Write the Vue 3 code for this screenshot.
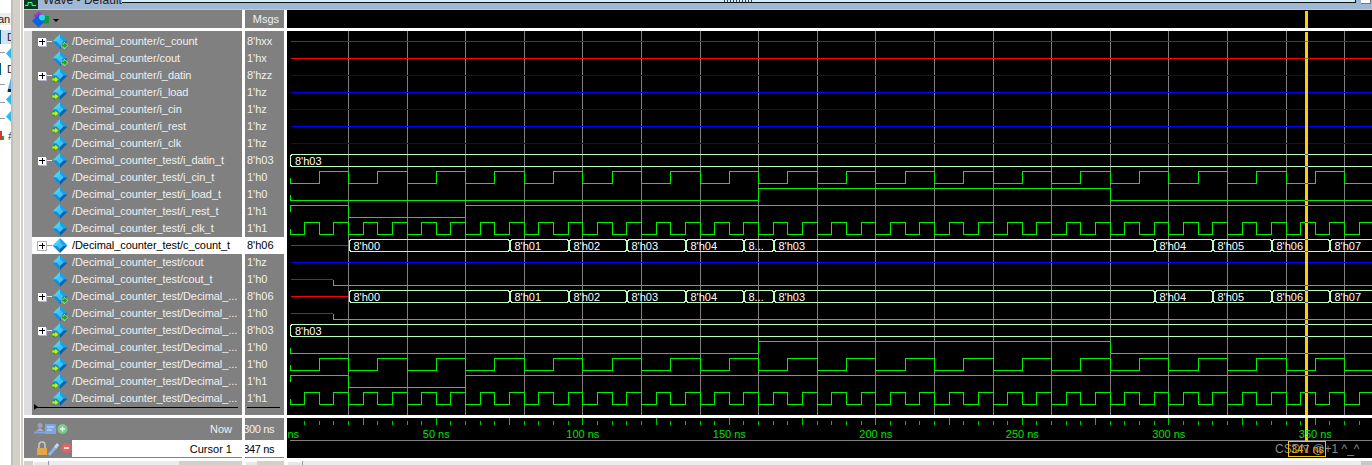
<template>
  <div class="app">
    <svg class="side" width="11" height="465">
      <rect x="0" y="13" width="11" height="12" fill="#ececec" />
      <text x="-2" y="23" class="side-text">an</text>
      <rect x="0" y="30" width="11" height="14" fill="#cfe3f2" />
      <rect x="0" y="30" width="1" height="14" fill="#0a5a86" />
      <text x="7" y="41" class="side-text">D</text>
      <path d="M0 52.5H5M0 84.5H5M0 102.5H5M0 118.5H5" stroke="#9a9a9a" />
      <polygon v-for="top in [47, 93, 110]" :key="top" :points="`6,${top + 6.5} 12,${top} 12,${top + 13}`" fill="#25bdf0" />
      <rect x="0" y="63" width="1" height="12" fill="#0a5a86" />
      <text x="7" y="73" class="side-text">D</text>
      <polygon points="7,92 11,78 11,92" fill="#4fb4e8" />
      <rect x="8" y="89" width="3" height="3" fill="#123" />
      <rect x="0" y="131" width="2" height="9" fill="#d33" />
      <rect x="2" y="136" width="2" height="4" fill="#2a2" />
      <text x="8" y="140" class="side-text">#</text>
    </svg>
    <div class="gutter"></div>

    <div class="window">
      <div class="title">
        <svg class="title-icon" width="14" height="9">
          <rect width="14" height="9" fill="#0b3b24" />
          <path d="M1 5.5H4V2.5H8V5.5H12" stroke="#3cff7a" fill="none" />
        </svg>
        <span class="title-text">Wave - Default</span>
        <div class="title-band"><i class="grip"></i></div>
        <div class="title-btn"></div>
      </div>

      <div class="panes">
        <!-- header row -->
        <div class="pane head-names">
          <svg width="20" height="18" viewBox="0 0 20 18">
            <polygon points="7,1.500 13,6 7,10.500 1,6" fill="#b030c8" />
            <rect x="10" y="6" width="7" height="7.500" fill="#14973c" />
            <polygon points="6.500,4.500 13,11 6.500,17.500 0,11" fill="#0d62e0" />
            <circle cx="10" cy="7.500" r="3" fill="#22dcec" />
          </svg>
          <i class="caret"></i>
        </div>
        <div class="pane head-msgs">Msgs</div>
        <div class="pane head-wave"><i class="cursor-bar"></i></div>

        <!-- signal list -->
        <div class="pane names">
          <div class="names-list">
            <div v-for="row in rows" :key="row.name + row.y" class="row" :class="{ selected: row.selected }">
              <span class="toggle-slot">
                <span v-if="row.expand" class="toggle">
                  <i class="plus"></i>
                </span>
                <i v-if="row.expand" class="stem"></i>
              </span>
              <svg class="sig-icon" width="16" height="15" viewBox="0 0 16 15">
                <polygon points="8,0 8,7.5 0.5,7.5" fill="#44d4fa" />
                <polygon points="8,0 15.5,7.5 8,7.5" fill="#12a4ea" />
                <polygon points="0.5,7.5 8,7.5 8,15" fill="#0f8fdc" />
                <polygon points="15.5,7.5 8,7.5 8,15" fill="#0560b4" />
                <polygon points="8,4 11.5,7.5 8,11 4.5,7.5" fill="#3cc4f6" />
                <template v-if="row.dir === 'out'">
                  <polygon points="9,10 12,10 12,8 16,11.5 12,15 12,13 9,13" fill="#1fa51f" stroke="#eaffea" stroke-width=".5" />
                </template>
                <template v-if="row.dir === 'in'">
                  <polygon points="0,10 3,10 3,8 7,11.5 3,15 3,13 0,13" fill="#b8f020" stroke="#1a7a1a" stroke-width=".5" />
                </template>
              </svg>
              <span class="sig-name">{{ row.name }}</span>
            </div>
            <div class="rule"></div>
          </div>
        </div>
        <div class="pane values">
          <div v-for="row in rows" :key="row.name + row.y" class="value" :class="{ selected: row.selected }">{{ row.value }}</div>
          <div class="value-rule"></div>
        </div>

        <!-- waves -->
        <div class="pane wave">
          <svg width="1085" height="384" :viewBox="`287 31 1085 384`" shape-rendering="crispEdges">
            <path :d="gridPath" stroke="#808080" fill="none" />
            <g v-for="row in rows" :key="row.name + row.y">
              <path v-if="row.lineColor" :d="`M${row.lineFrom} ${row.y + 0.5}H${row.lineTo}`" :stroke="row.lineColor" fill="none" />
              <path v-if="row.green" :d="row.green" stroke="#00f000" fill="none" />
              <path v-if="row.bus" :d="row.bus" stroke="#bcffbc" fill="none" />
              <text v-for="label in row.labels" :key="label.x" :x="label.x" :y="row.y + 4.5" class="bus-label">{{ label.text }}</text>
            </g>
            <rect x="1305" y="32" width="3" height="383" fill="#ffd000" />
            <rect v-for="mark in cursorMarks" :key="mark.y" x="1305" :y="mark.y" width="3" height="1" :fill="mark.color" />
          </svg>
        </div>

        <!-- cursor rows -->
        <div class="pane now-names">
          <div class="now-row">
            <svg width="36" height="14" viewBox="0 0 36 14">
              <circle cx="7" cy="3.5" r="2.5" fill="#9aa4b4" />
              <path d="M3 9l4-3 4 3z" fill="#a8b0be" />
              <path d="M1 10.5H12" stroke="#7ca6e0" stroke-width="2" />
              <rect x="12" y="2" width="11" height="10" rx="1" fill="#7da5e0" />
              <path d="M14 5h7M14 8h5" stroke="#d8e6f8" />
              <circle cx="29.5" cy="7" r="5" fill="#7cc78c" />
              <path d="M27 7h5M29.5 4.500v5" stroke="#e6f7ea" stroke-width="1.500" />
            </svg>
            <span class="now-label">Now</span>
          </div>
          <div class="cursor-row">
            <svg width="36" height="15" viewBox="0 0 36 15">
              <rect x="1" y="7" width="10" height="7" fill="#e0a848" />
              <path d="M3 7V4a3 3 0 0 1 6 0v3" stroke="#c8c8c8" stroke-width="1.500" fill="none" />
              <path d="M13 14l6-7" stroke="#8ab4ec" stroke-width="3" />
              <path d="M19 7l3-4" stroke="#c4d8f0" stroke-width="3" />
              <circle cx="30.500" cy="7" r="5" fill="#e06464" />
              <path d="M28 7h5" stroke="#fff" stroke-width="1.500" />
            </svg>
            <span class="cursor-field">Cursor 1</span>
          </div>
        </div>
        <div class="pane now-values">
          <div class="now-value">300 ns</div>
          <div class="cursor-value">347 ns</div>
        </div>
        <div class="pane ruler">
          <svg width="1085" height="40" viewBox="287 418 1085 40" shape-rendering="crispEdges">
            <path :d="tickPath" stroke="#00c800" fill="none" />
            <path d="M290 440.5H1372" stroke="#808080" fill="none" />
            <rect x="1305" y="418" width="3" height="23" fill="#ffd000" />
            <text v-for="tick in rulerLabels" :key="tick.text" :x="tick.x" y="438" class="ruler-label">{{ tick.text }}</text>
            <text x="1275" y="453" class="watermark">CSDN @+1 ^_^</text>
            <rect x="1288.5" y="441.500" width="37" height="15" fill="none" stroke="#ffc000" />
            <text x="1291" y="453" class="cursor-time">347 ns</text>
          </svg>
        </div>

        <!-- scrollbars -->
        <div class="scroll scroll-names"><i class="scroll-btn"></i><i class="scroll-thumb"></i></div>
        <div class="scroll"><i class="scroll-btn small"></i></div>
        <div class="scroll scroll-wave"><i class="scroll-btn"></i><i class="scroll-thumb wide"></i></div>
      </div>
    </div>
  </div>
</template>

<script setup>
const NS = 2.93
const ORIGIN = 289.3
const END = 370

const px = (ns) => Math.round(ORIGIN + ns * NS) + 0.5

// a level wave: [ns, 'h' | 'l'] steps, with the short stub at time zero
function levelPath(y, steps) {
  const level = (l) => y + (l === 'h' ? -6 : 6) + 0.5
  let d = `M290.5 ${y + 0.5}V${level(steps[0][1])}`
  for (const [ns, l] of steps.slice(1)) {
    d += `H${px(ns)}V${level(l)}`
  }
  return d + 'H1372'
}

function clock(first, period) {
  const steps = [[0, 'l']]
  for (let t = first, high = true; t < END; t += period / 2, high = !high) {
    steps.push([t, high ? 'h' : 'l'])
  }
  return steps
}

const CLK = clock(5, 10)
const CIN = clock(10, 20)
const LOAD = [[0, 'l'], [160, 'h'], [280, 'l']]
const REST = [[0, 'h'], [20, 'l'], [60, 'h']]

// one box per value: square ends with clipped corners, 1px apart
function busPath(y, segs) {
  const c = y + 0.5
  let d = ''
  segs.forEach(([from], i) => {
    const x1 = i === 0 && from === 0 ? 290.5 : px(from) + 1
    const x2 = segs[i + 1] ? px(segs[i + 1][0]) : 1380
    d += `M${x1 + 1} ${c - 6}H${x2 - 1}L${x2} ${c - 4}V${c + 4}L${x2 - 1} ${c + 6}H${x1 + 1}L${x1} ${c + 4}V${c - 4}Z`
  })
  return d
}

const COUNT = [
  [20, "8'h00"], [75, "8'h01"], [95, "8'h02"], [115, "8'h03"], [135, "8'h04"],
  [155, '8...'], [165, "8'h03"], [295, "8'h04"], [315, "8'h05"], [335, "8'h06"], [355, "8'h07"],
]
const DATIN = [[0, "8'h03"]]

const busLabels = (segs) => segs.map(([ns, text]) => ({ x: (ns === 0 ? 290 : px(ns)) + 5, text }))

const T = '/Decimal_counter_test/'
const D = T + 'Decimal_...'
const defs = [
  { name: '/Decimal_counter/c_count', value: "8'hxx", dir: 'out', expand: true, line: '#d00000' },
  { name: '/Decimal_counter/cout', value: "1'hx", dir: 'out', line: '#ff0000' },
  { name: '/Decimal_counter/i_datin', value: "8'hzz", dir: 'in', expand: true, line: '#0000c8' },
  { name: '/Decimal_counter/i_load', value: "1'hz", dir: 'in', line: '#0000ff' },
  { name: '/Decimal_counter/i_cin', value: "1'hz", dir: 'in', line: '#0000c8' },
  { name: '/Decimal_counter/i_rest', value: "1'hz", dir: 'in', line: '#0000ff' },
  { name: '/Decimal_counter/i_clk', value: "1'hz", dir: 'in', line: '#0000c8' },
  { name: T + 'i_datin_t', value: "8'h03", expand: true, segs: DATIN },
  { name: T + 'i_cin_t', value: "1'h0", wave: CIN },
  { name: T + 'i_load_t', value: "1'h0", wave: LOAD },
  { name: T + 'i_rest_t', value: "1'h1", wave: REST },
  { name: T + 'i_clk_t', value: "1'h1", wave: CLK },
  { name: T + 'c_count_t', value: "8'h06", expand: true, selected: true, segs: COUNT, line: '#ff0000', lineTo: 348 },
  { name: T + 'cout', value: "1'hz", line: '#0000ff' },
  { name: T + 'cout_t', value: "1'h0", line: '#e00000', lineTo: 333, tail: 15 },
  { name: D, value: "8'h06", dir: 'out', expand: true, segs: COUNT, line: '#ff0000', lineTo: 348 },
  { name: D, value: "1'h0", dir: 'out', line: '#e00000', lineTo: 333, tail: 15 },
  { name: D, value: "8'h03", dir: 'in', expand: true, segs: DATIN },
  { name: D, value: "1'h0", dir: 'in', wave: LOAD },
  { name: D, value: "1'h0", dir: 'in', wave: CIN },
  { name: D, value: "1'h1", dir: 'in', wave: REST },
  { name: D, value: "1'h1", dir: 'in', wave: CLK },
]

const rows = defs.map((def, i) => {
  const y = 41 + i * 17
  return {
    ...def,
    y,
    lineColor: def.line,
    lineFrom: 291,
    lineTo: def.lineTo ?? 1372,
    green: def.wave
      ? levelPath(y, def.wave)
      : def.tail
        ? `M${px(def.tail)} ${y + 0.5}V${y + 6.5}H1372`
        : null,
    bus: def.segs ? busPath(y, def.segs) : null,
    labels: def.segs ? busLabels(def.segs) : [],
  }
})

// the cursor is drawn in XOR, so each line leaves a coloured dot on it
const levelAt = (steps, ns) => {
  let l = steps[0][1]
  for (const [t, v] of steps) if (t <= ns) l = v
  return l
}
const cursorMarks = []
for (const row of rows) {
  if (row.wave) {
    cursorMarks.push({ y: row.y + (levelAt(row.wave, 347) === 'h' ? -6 : 6), color: '#e02000' })
  } else if (row.tail) {
    cursorMarks.push({ y: row.y + 6, color: '#e02000' })
  } else if (row.segs) {
    cursorMarks.push({ y: row.y - 6, color: '#4060c0' }, { y: row.y + 6, color: '#4060c0' })
  } else if (row.line === '#d00000' || row.line === '#ff0000') {
    cursorMarks.push({ y: row.y, color: '#20c020' })
  }
}

let gridPath = ''
for (let ns = 20; ns < END; ns += 20) gridPath += `M${px(ns)} 31V415`

let tickPath = ''
for (let ns = 5; ns < END; ns += 5) tickPath += `M${px(ns)} ${ns % 25 === 0 ? 418 : 421}V425`

const rulerLabels = []
for (let ns = 0; ns <= 350; ns += 50) {
  rulerLabels.push({ x: ORIGIN + ns * NS - (ns === 0 ? 11 : ns < 100 ? 13 : 16), text: `${ns} ns` })
}
</script>

<style>
body {
  margin: 0;
  overflow: hidden;
  background: #fff;
}
</style>

<style scoped>
.app {
  width: 1372px;
  height: 465px;
  display: flex;
  overflow: hidden;
  background: #fff;
  font-family: "Liberation Sans", Arial, sans-serif;
  font-size: 11px;
}

.side {
  flex: none;
  display: block;
}

.side-text {
  font-size: 11px;
  fill: #222;
}

.gutter {
  flex: none;
  width: 13px;
  background: linear-gradient(90deg, #c0c0c0 0 2px, #d4d0c8 2px 9px, #fff 9px 10px, #d4d0c8 10px 12px, #fff 12px);
}

.window {
  flex: 1;
  min-width: 0;
  display: flex;
  flex-direction: column;
}

.title {
  height: 9px;
  display: flex;
  flex: none;
  overflow: hidden;
  background: #a0b8d4;
  border-bottom: 1px solid #c8c8c8;
}

.title-icon {
  flex: none;
}

.title-text {
  margin: -7px 0 0 5px;
  width: 79px;
  flex: none;
  font-size: 12px;
  line-height: 14px;
  color: #222;
}

.title-band {
  width: 1233px;
  height: 2px;
  flex: none;
  display: flex;
  justify-content: center;
  background: #cdeefa;
  border-right: 1px solid #111;
  border-bottom: 1px solid #111;
}

.grip {
  width: 30px;
  height: 2px;
  background: repeating-linear-gradient(90deg, #345 0 1px, transparent 1px 3px);
}

.title-btn {
  width: 9px;
  height: 3px;
  margin-left: 5px;
  background: #fff;
  border-right: 1px solid #777;
  border-bottom: 1px solid #777;
}

.panes {
  flex: 1;
  display: grid;
  grid-template-columns: 218px 39px 1085px;
  grid-template-rows: 18px 384px 40px 1fr;
  gap: 3px;
  background: #fff;
}

.pane {
  position: relative;
  overflow: hidden;
  background: #808080;
  color: #f0f0f0;
}

.head-names {
  display: flex;
  align-items: center;
  padding-left: 8px;
}

.caret {
  margin: 2px 0 0 1px;
  border: 3px solid transparent;
  border-top: 3px solid #000;
  border-bottom: 0;
}

.head-msgs {
  display: flex;
  align-items: center;
  justify-content: flex-end;
  padding-right: 5px;
}

.head-wave,
.wave,
.ruler {
  background: #000;
}

.cursor-bar {
  position: absolute;
  left: 1018px;
  top: 1px;
  width: 3px;
  height: 17px;
  background: #ffd000;
}

.names {
  padding-left: 8px;
  background: #dedede;
}

.names-list {
  height: 100%;
  padding-top: 2px;
  box-sizing: border-box;
  background: #808080;
}

.row {
  height: 17px;
  display: flex;
  align-items: center;
  white-space: nowrap;
}

.row.selected {
  background: #fff;
  color: #000;
}

.toggle-slot {
  width: 20px;
  height: 17px;
  flex: none;
  display: flex;
  align-items: center;
  padding-left: 6px;
  box-sizing: border-box;
}

.toggle {
  width: 8px;
  height: 8px;
  flex: none;
  position: relative;
  background: #fff;
  box-shadow: 1px 1px 0 #b4b4c4;
}

.selected .toggle {
  outline: 1px solid #b0b0b0;
}

.plus {
  position: absolute;
  left: 1px;
  top: 3.500px;
  width: 6px;
  height: 1px;
  background: #000;
}

.plus::after {
  content: "";
  position: absolute;
  left: 2.500px;
  top: -2.500px;
  width: 1px;
  height: 6px;
  background: #000;
}

.stem {
  width: 6px;
  height: 1px;
  background: #e8e8e8;
}

.selected .stem {
  background: #999;
}

.sig-icon {
  flex: none;
}

.sig-name {
  margin: -2px 0 0 4px;
  letter-spacing: -0.07px;
}

.rule {
  position: relative;
  height: 1px;
  margin: 0 4px 0 2px;
  background: #000;
}

.rule::before {
  content: "";
  position: absolute;
  left: 0;
  top: -3px;
  border: 3px solid transparent;
  border-left: 4px solid #000;
  border-right: 0;
}

.values {
  padding-top: 2px;
}

.value {
  height: 17px;
  line-height: 17px;
  padding-left: 2px;
  white-space: nowrap;
}

.value.selected {
  background: #fff;
  color: #000;
}

.value-rule {
  height: 1px;
  margin: 0 4px 0 2px;
  background: #000;
}

.wave svg,
.ruler svg {
  display: block;
}

.bus-label {
  font-size: 11px;
  fill: #fff;
  shape-rendering: auto;
}

.ruler-label {
  font-size: 11px;
  fill: #00e000;
}

.watermark {
  font-size: 12px;
  fill: #8a8a8a;
}

.cursor-time {
  font-size: 11px;
  fill: #e8b000;
}

.now-row {
  height: 22px;
  display: flex;
  align-items: center;
  padding-left: 9px;
}

.now-label {
  margin-left: auto;
  margin-right: 10px;
}

.cursor-row {
  height: 17px;
  display: flex;
  align-items: center;
  padding-left: 12px;
}

.cursor-field {
  flex: 1;
  height: 17px;
  line-height: 18px;
  text-align: right;
  padding-right: 10px;
  background: #fff;
  color: #000;
}

.now-value {
  height: 22px;
  display: flex;
  align-items: center;
  justify-content: flex-end;
  padding-right: 10px;
  white-space: nowrap;
  letter-spacing: -0.4px;
}

.cursor-value {
  height: 17px;
  display: flex;
  align-items: center;
  justify-content: flex-end;
  padding-right: 10px;
  white-space: nowrap;
  letter-spacing: -0.4px;
  background: #fff;
  color: #000;
}

.scroll {
  display: flex;
  background: #d4d0c8;
}

.scroll-names {
  padding-left: 9px;
}

.scroll-btn {
  width: 15px;
  flex: none;
  background: #e8e8e8;
  border-left: 1px solid #fff;
  border-top: 1px solid #fff;
  box-sizing: border-box;
}

.scroll-btn.small {
  width: 12px;
}

.scroll-thumb {
  width: 130px;
  background: #ececec;
  border-left: 1px solid #999;
}

.scroll-thumb.wide {
  width: 1058px;
}

.scroll-wave {
  background: #c8c8c8;
}
</style>
